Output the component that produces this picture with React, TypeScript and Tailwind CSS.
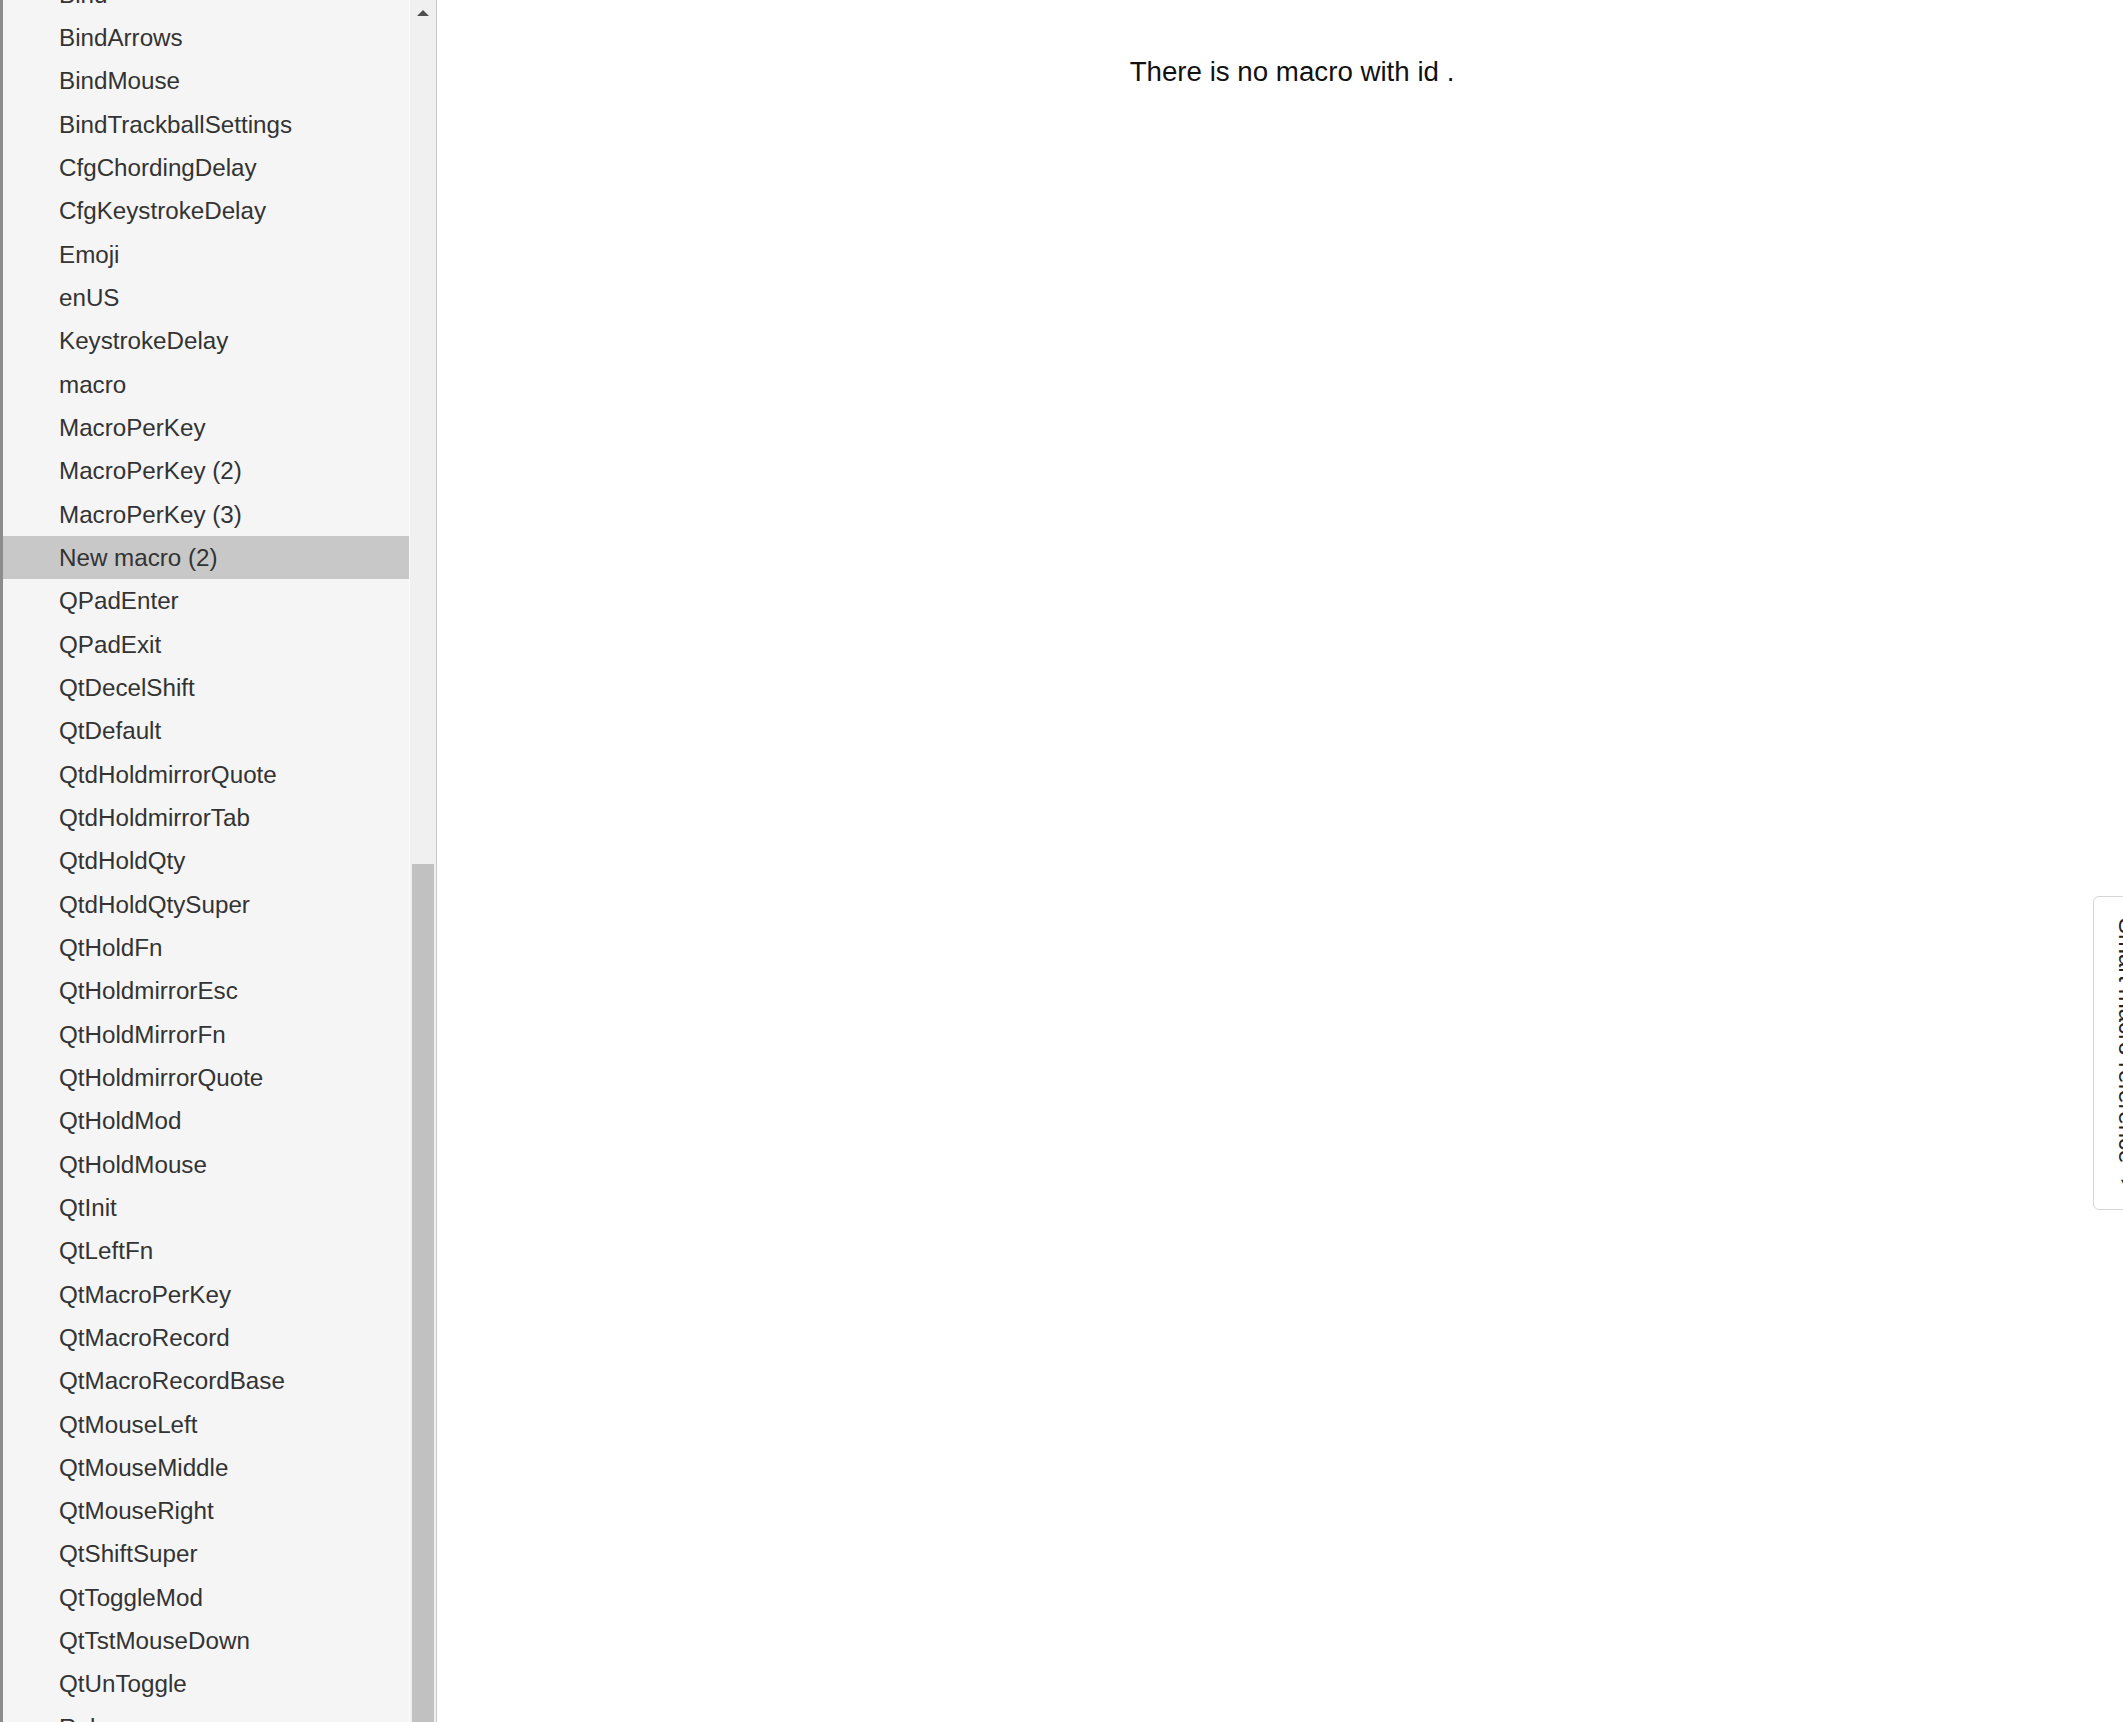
import React from "react";

const items = [
  "Bind",
  "BindArrows",
  "BindMouse",
  "BindTrackballSettings",
  "CfgChordingDelay",
  "CfgKeystrokeDelay",
  "Emoji",
  "enUS",
  "KeystrokeDelay",
  "macro",
  "MacroPerKey",
  "MacroPerKey (2)",
  "MacroPerKey (3)",
  "New macro (2)",
  "QPadEnter",
  "QPadExit",
  "QtDecelShift",
  "QtDefault",
  "QtdHoldmirrorQuote",
  "QtdHoldmirrorTab",
  "QtdHoldQty",
  "QtdHoldQtySuper",
  "QtHoldFn",
  "QtHoldmirrorEsc",
  "QtHoldMirrorFn",
  "QtHoldmirrorQuote",
  "QtHoldMod",
  "QtHoldMouse",
  "QtInit",
  "QtLeftFn",
  "QtMacroPerKey",
  "QtMacroRecord",
  "QtMacroRecordBase",
  "QtMouseLeft",
  "QtMouseMiddle",
  "QtMouseRight",
  "QtShiftSuper",
  "QtToggleMod",
  "QtTstMouseDown",
  "QtUnToggle",
  "Release",
];

export default function App() {
  return (
    <div className="relative flex h-[1722px] w-[2123px] overflow-hidden bg-white font-['Liberation_Sans',Arial,sans-serif]">
      <div className="w-[3px] shrink-0 bg-[#8c8c8c]" />
      <div className="w-[406px] shrink-0 overflow-hidden bg-[#f5f5f5]">
        <ul className="mt-[-27.33px]">
          {items.map((name) => (
            <li
              key={name}
              className={
                name === "New macro (2)"
                  ? "h-[43.33px] bg-[#c8c8c8] pl-[56px] text-[24.2px] leading-[43.33px] text-[#333333] whitespace-nowrap"
                  : "h-[43.33px] pl-[56px] text-[24.2px] leading-[43.33px] text-[#333333] whitespace-nowrap"
              }
            >
              {name}
            </li>
          ))}
        </ul>
      </div>
      <div className="w-px shrink-0 bg-[#fafafa]" />
      <div className="flex w-[26px] shrink-0 flex-col bg-[#f0f0f0]">
        <div className="flex h-[864px] shrink-0 justify-center pt-[10px]">
          <svg width="12" height="6" viewBox="0 0 12 6">
            <polygon points="0,6 12,6 6,0" fill="#505050" />
          </svg>
        </div>
        <div className="mx-[2px] flex-1 bg-[#c1c1c1]" />
      </div>
      <div className="w-px shrink-0 bg-[#c8c8c8]" />
      <main className="flex-1 pl-[24px] pt-[51px]">
        <p className="text-center text-[27.7px] text-[#111111]">There is no macro with id .</p>
      </main>
      <div className="absolute left-[2093px] top-[896px] h-[314px] rounded-l-[6px] border border-[#d6d6d6] bg-white pl-[15px] pr-[18px] pt-[21px] [writing-mode:vertical-rl]">
        <span className="whitespace-nowrap text-[24px] text-[#222222]">Smart macro reference ▾</span>
      </div>
    </div>
  );
}
